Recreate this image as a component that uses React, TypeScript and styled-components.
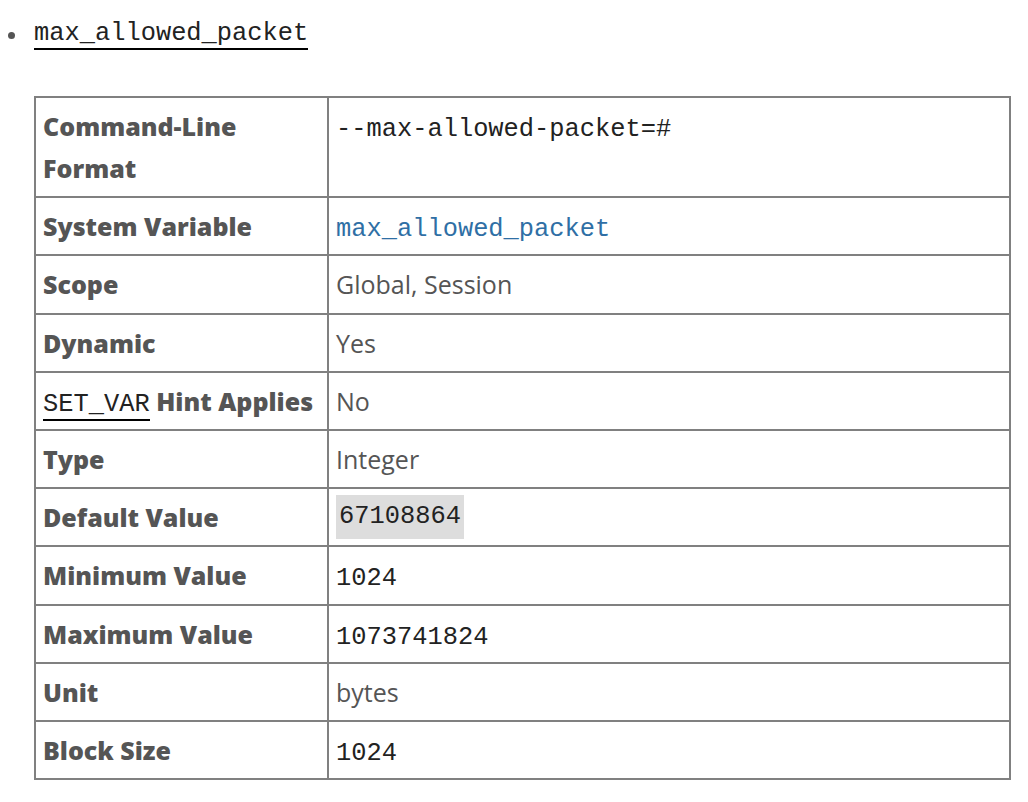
import React from "react";
import styled, { createGlobalStyle } from "styled-components";

const Global = createGlobalStyle`
  html, body { margin: 0; padding: 0; background: #fff; }
  body { font-family: "Open Sans", "Noto Sans", sans-serif; color: #555; }
`;

const List = styled.ul`
  list-style: none;
  margin: 0;
  padding: 18px 17px 0 8px;
`;

const Item = styled.li`
  display: flex;
  flex-direction: column;
`;

const ItemHead = styled.div`
  display: flex;
  align-items: center;
  gap: 19px;
  height: 34px;
`;

const Bullet = styled.span`
  width: 7px;
  height: 7px;
  border-radius: 50%;
  background: #555;
  flex: none;
`;

const Mono = styled.code<{ $color?: string; $underline?: boolean; $bg?: boolean }>`
  font-family: "Liberation Mono", "Courier New", monospace;
  font-size: 25.4px;
  font-weight: 400;
  line-height: 1;
  color: ${(p) => p.$color || "#222"};
  ${(p) => (p.$underline ? "border-bottom: 2px solid #000; line-height: 1.1;" : "")}
  ${(p) =>
    p.$bg
      ? "display: inline-block; background: #ddd; padding: 0 3px; height: 44px; line-height: 44px; vertical-align: top; margin-top: -1px; margin-bottom: -1px;"
      : ""}
`;

const Table = styled.table`
  margin: 44px 0 0 26px;
  width: 977px;
  border-collapse: collapse;
  border: 2px solid #808080;
`;

const Cell = styled.td<{ $head?: boolean }>`
  border: 2px solid #808080;
  padding: 7.1px 7px;
  font-size: 25px;
  line-height: 42px;
  vertical-align: top;
  color: #555;
  font-weight: ${(p) => (p.$head ? 800 : 400)};
  width: ${(p) => (p.$head ? "277px" : "auto")};
  white-space: ${(p) => (p.$head ? "normal" : "nowrap")};
`;

type Row = { label: React.ReactNode; value: React.ReactNode };

const rows: Row[] = [
  { label: "Command-Line Format", value: <Mono>--max-allowed-packet=#</Mono> },
  { label: "System Variable", value: <Mono $color="#2f6fa5">max_allowed_packet</Mono> },
  { label: "Scope", value: "Global, Session" },
  { label: "Dynamic", value: "Yes" },
  {
    label: (
      <>
        <Mono $underline>SET_VAR</Mono> Hint Applies
      </>
    ),
    value: "No",
  },
  { label: "Type", value: "Integer" },
  { label: "Default Value", value: <Mono $bg>67108864</Mono> },
  { label: "Minimum Value", value: <Mono>1024</Mono> },
  { label: "Maximum Value", value: <Mono>1073741824</Mono> },
  { label: "Unit", value: "bytes" },
  { label: "Block Size", value: <Mono>1024</Mono> },
];

export default function App() {
  return (
    <>
      <Global />
      <List>
        <Item>
          <ItemHead>
            <Bullet />
            <Mono $underline>max_allowed_packet</Mono>
          </ItemHead>
          <Table>
            <tbody>
              {rows.map((r, i) => (
                <tr key={i}>
                  <Cell $head>{r.label}</Cell>
                  <Cell>{r.value}</Cell>
                </tr>
              ))}
            </tbody>
          </Table>
        </Item>
      </List>
    </>
  );
}
